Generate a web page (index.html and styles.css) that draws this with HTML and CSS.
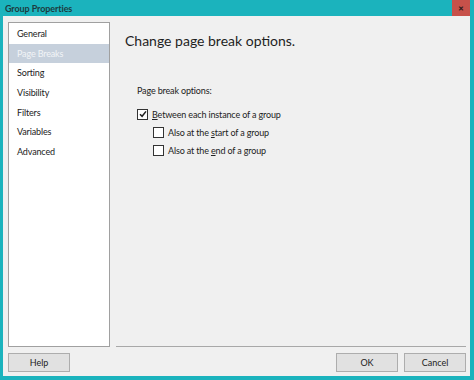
FILE: index.html
```html
<!DOCTYPE html>
<html>

<head>
    <title>Group Properties</title>
    <link rel="stylesheet" href="styles.css">
</head>

<body>
    <div class="window">
        <div class="titlebar">
            <span class="title">Group Properties</span>
            <span class="close">&#x2715;</span>
        </div>
        <div class="client">
            <div class="top">
                <ul class="nav">
                    <li>General</li>
                    <li class="selected">Page Breaks</li>
                    <li>Sorting</li>
                    <li>Visibility</li>
                    <li>Filters</li>
                    <li>Variables</li>
                    <li>Advanced</li>
                </ul>
                <div class="pane">
                    <h1>Change page break options.</h1>
                    <div class="group-label">Page break options:</div>
                    <label class="check first">
                        <span class="box checked">
                            <svg width="8" height="8" viewBox="0 0 8 8"><path d="M1 4.2 L3.1 6.3 L7 1.4" fill="none" stroke="#222" stroke-width="1.5"/></svg>
                        </span>
                        <span><u>B</u>etween each instance of a group</span>
                    </label>
                    <label class="check sub">
                        <span class="box"></span>
                        <span>Also at the <u>s</u>tart of a group</span>
                    </label>
                    <label class="check sub">
                        <span class="box"></span>
                        <span>Also at the <u>e</u>nd of a group</span>
                    </label>
                </div>
            </div>
            <div class="footer">
                <button class="btn">Help</button>
                <div class="right">
                    <button class="btn">OK</button>
                    <button class="btn">Cancel</button>
                </div>
            </div>
        </div>
    </div>
</body>

</html>
```

FILE: styles.css
```css
body {
    margin: 0;
    font-family: Lato, "Noto Sans", sans-serif;
}

.window {
    width: 474px;
    height: 380px;
    background-color: #1bb3bd;
    display: flex;
    flex-direction: column;
    box-sizing: border-box;
    padding: 0 4px 4px 3px;
}

.titlebar {
    height: 16px;
    display: flex;
    align-items: center;
    justify-content: space-between;
    margin-right: -4px;
}

.title {
    font-size: 9px;
    font-weight: bold;
    color: #1d3b40;
    padding-left: 2px;
    letter-spacing: -0.1px;
}

.close {
    width: 18px;
    height: 16px;
    margin-right: 4px;
    background-color: #c7514a;
    color: #2a1a1a;
    font-size: 7px;
    font-weight: bold;
    display: flex;
    justify-content: center;
    align-items: center;
}

.client {
    flex: 1;
    background-color: #f0f0f0;
    display: flex;
    flex-direction: column;
    padding: 6px 4px 0 5px;
}

.top {
    display: flex;
    height: 325px;
}

.nav {
    list-style: none;
    margin: 0;
    padding: 1px 0 0 0;
    width: 102px;
    box-sizing: border-box;
    background-color: #fff;
    border: 1px solid #a0a0a0;
}

.nav li {
    height: 19.7px;
    line-height: 19px;
    padding-left: 8px;
    font-size: 9px;
    letter-spacing: -0.15px;
    color: #222;
}

.nav li.selected {
    background-color: #c6d0dc;
    color: #f2f4f7;
}

.pane {
    flex: 1;
    margin-left: 6px;
    border-bottom: 1px solid #a8a8a8;
    padding-left: 9px;
}

h1 {
    margin: 10px 0 0 0;
    font-size: 14px;
    font-weight: normal;
    color: #1e1e1e;
}

.group-label {
    margin: 36px 0 0 12px;
    font-size: 9px;
    letter-spacing: -0.15px;
    color: #222;
}

.check {
    display: flex;
    align-items: center;
    margin: 8px 0 0 12px;
    font-size: 9px;
    letter-spacing: -0.15px;
    color: #222;
    height: 10px;
}

.check.first {
    margin-top: 13px;
}

.check.sub {
    margin-left: 28px;
}

.box {
    width: 9px;
    height: 9px;
    border: 1px solid #333;
    background-color: #fff;
    margin-right: 4px;
    display: flex;
    justify-content: center;
    align-items: center;
}

.footer {
    display: flex;
    justify-content: space-between;
    padding-top: 6px;
}

.right {
    display: flex;
    gap: 6px;
}

.btn {
    width: 62px;
    height: 19px;
    background-color: #e1e1e1;
    border: 1px solid #adadad;
    font-family: Lato, "Noto Sans", sans-serif;
    font-size: 9px;
    color: #222;
    padding: 0;
}
```
